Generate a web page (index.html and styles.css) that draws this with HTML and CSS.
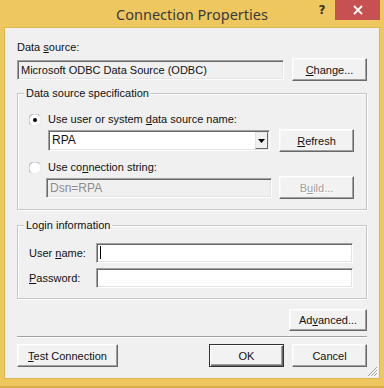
FILE: index.html
```html
<!DOCTYPE html>
<html lang="en">
<head>
    <meta charset="UTF-8">
    <meta name="viewport" content="width=device-width, initial-scale=1.0">
    <title>Connection Properties</title>
    <link rel="stylesheet" href="styles.css">
</head>
<body>
    <div class="window">
        <div class="titlebar">
            <div></div>
            <div class="title">Connection Properties</div>
            <div class="controls">
                <span class="help">?</span>
                <span class="close">
                    <svg width="10" height="10" viewBox="0 0 10 10"><path d="M1 1L9 9M9 1L1 9" stroke="#fff" stroke-width="1.8"/></svg>
                </span>
            </div>
        </div>

        <div class="client">
            <div class="label">Data <u>s</u>ource:</div>
            <div class="row">
                <div class="field readonly source">Microsoft ODBC Data Source (ODBC)</div>
                <button class="btn"><u>C</u>hange...</button>
            </div>

            <fieldset class="group spec">
                <legend>Data source specification</legend>
                <div class="radio-row">
                    <svg class="radio" width="12" height="12" viewBox="0 0 12 12">
                        <circle cx="6" cy="6" r="5.5" fill="#fff"/>
                        <path d="M1.5 10.5A6 6 0 0 1 10.5 1.5" fill="none" stroke="#a0a0a0"/>
                        <path d="M10.5 1.5A6 6 0 0 1 1.5 10.5" fill="none" stroke="#e3e3e3"/>
                        <circle cx="6" cy="6" r="2" fill="#000"/>
                    </svg>
                    <span>Use user or system <u>d</u>ata source name:</span>
                </div>
                <div class="row indent">
                    <div class="field combo">
                        <span>RPA</span>
                        <span class="drop">
                            <svg width="7" height="4" viewBox="0 0 7 4"><path d="M0 0H7L3.5 4Z" fill="#000"/></svg>
                        </span>
                    </div>
                    <button class="btn btn-narrow"><u>R</u>efresh</button>
                </div>
                <div class="radio-row second">
                    <svg class="radio" width="12" height="12" viewBox="0 0 12 12">
                        <circle cx="6" cy="6" r="5.5" fill="#fff"/>
                        <path d="M1.5 10.5A6 6 0 0 1 10.5 1.5" fill="none" stroke="#a0a0a0"/>
                        <path d="M10.5 1.5A6 6 0 0 1 1.5 10.5" fill="none" stroke="#e3e3e3"/>
                    </svg>
                    <span>Use co<u>n</u>nection string:</span>
                </div>
                <div class="row indent tight">
                    <div class="field readonly disabled conn">Dsn=RPA</div>
                    <button class="btn btn-narrow disabled">B<u>u</u>ild...</button>
                </div>
            </fieldset>

            <fieldset class="group login">
                <legend>Login information</legend>
                <div class="login-row">
                    <span class="login-label">User <u>n</u>ame:</span>
                    <div class="field login-field"><span class="caret"></span></div>
                </div>
                <div class="login-row">
                    <span class="login-label"><u>P</u>assword:</span>
                    <div class="field login-field"></div>
                </div>
            </fieldset>

            <div class="advanced-row">
                <button class="btn advanced">Ad<u>v</u>anced...</button>
            </div>

            <div class="separator"></div>

            <div class="footer">
                <button class="btn test"><u>T</u>est Connection</button>
                <div class="footer-right">
                    <button class="btn btn-default">OK</button>
                    <button class="btn">Cancel</button>
                </div>
            </div>

            <svg class="grip" width="12" height="12" viewBox="0 0 12 12">
                <path d="M11 2L2 11M11 5L5 11M11 8L8 11" stroke="#a0a0a0" stroke-width="1"/>
                <path d="M12 3L3 12M12 6L6 12M12 9L9 12" stroke="#fff" stroke-width="1"/>
            </svg>
        </div>
    </div>
</body>
</html>
```

FILE: styles.css
```css
body {
    margin: 0;
    font-family: 'Liberation Sans', Arial, sans-serif;
    font-size: 11px;
    color: #111;
}
u {
    text-decoration: underline;
    text-underline-offset: 1px;
}
.window {
    width: 384px;
    height: 388px;
    background-color: #efc75f;
    box-sizing: border-box;
    border-bottom: 2px solid #d9ae47;
}
.titlebar {
    height: 28px;
    display: grid;
    grid-template-columns: 1fr auto 1fr;
}
.title {
    font-family: 'Noto Sans', sans-serif;
    font-size: 14.5px;
    color: #3a3a3a;
    line-height: 28px;
}
.controls {
    display: flex;
    justify-content: flex-end;
    align-items: flex-start;
    padding-right: 4px;
}
.help {
    font-family: 'DejaVu Sans', sans-serif;
    font-weight: bold;
    font-size: 12px;
    color: #333;
    width: 26px;
    line-height: 20px;
    text-align: center;
}
.close {
    width: 45px;
    height: 20px;
    background-color: #c75050;
    display: flex;
    align-items: center;
    justify-content: center;
}
.client {
    position: relative;
    margin: 0 5px;
    height: 350px;
    background-color: #f0f0f0;
    box-shadow: 0 0 0 1px #dcb650;
    padding: 13px 12px 0 12px;
    box-sizing: border-box;
}
.label {
    line-height: 13px;
    margin-bottom: 4px;
}
.row {
    display: flex;
    align-items: center;
    justify-content: space-between;
}
.field {
    height: 20px;
    box-sizing: border-box;
    background: #fff;
    border: 1px solid;
    border-color: #a0a0a0 #fff #fff #a0a0a0;
    box-shadow: inset 1px 1px 0 #696969, inset -1px -1px 0 #e3e3e3;
    padding: 3px 0 0 3px;
    line-height: 13px;
    white-space: nowrap;
}
.readonly {
    background: #f0f0f0;
}
.source {
    width: 267px;
}
.btn {
    width: 75px;
    height: 23px;
    box-sizing: border-box;
    font-family: 'Liberation Sans', Arial, sans-serif;
    font-size: 11px;
    color: #111;
    background: #f2f2f2;
    border: 1px solid;
    border-color: #fff #696969 #696969 #fff;
    box-shadow: inset -1px -1px 0 #a0a0a0, inset 1px 1px 0 #f8f8f8;
    padding: 0;
}
.btn.disabled {
    color: #a0a0a0;
    text-shadow: 1px 1px 0 #fff;
}
.btn-default {
    border-color: #333;
    box-shadow: inset 1px 1px 0 #fff, inset -1px -1px 0 #696969, inset -2px -2px 0 #a0a0a0;
}
.group {
    margin: 6px 0 0 0;
    padding: 13px 11px 10px 11px;
    border: 1px solid #c5c5c5;
    box-shadow: inset 1px 1px 0 #fff, 1px 1px 0 #fff;
}
.group legend {
    padding: 0 2px;
    margin-left: -5px;
    line-height: 13px;
    background: #f0f0f0;
}
.radio-row {
    display: flex;
    align-items: center;
    gap: 7px;
    line-height: 13px;
}
.radio-row.second {
    margin-top: 9px;
}
.indent {
    margin: 3px 0 0 19px;
}
.indent.tight {
    margin-top: 2px;
}
.btn-narrow {
    margin-right: 1px;
}
.combo {
    width: 222px;
    height: 21px;
    display: flex;
    justify-content: space-between;
    padding-right: 1px;
    font-size: 12px;
}
.drop {
    width: 13px;
    height: 17px;
    margin-top: -2px;
    box-sizing: border-box;
    background: #f0f0f0;
    border: 1px solid;
    border-color: #e3e3e3 #696969 #696969 #e3e3e3;
    display: flex;
    align-items: center;
    justify-content: center;
}
.conn {
    width: 226px;
    margin-left: -2px;
    color: #8c8c8c;
    font-size: 12px;
}
.login {
    margin-top: 9px;
    padding: 11px 13px 10px 11px;
}
.login-row {
    display: flex;
    align-items: center;
}
.login-row + .login-row {
    margin-top: 5px;
}
.login-label {
    width: 67px;
}
.login-field {
    flex: 1;
    padding: 2px 0 0 3px;
}
.caret {
    display: block;
    width: 1px;
    height: 13px;
    background: #000;
}
.advanced-row {
    display: flex;
    justify-content: flex-end;
    margin-top: 10px;
}
.advanced {
    width: 78px;
    height: 22px;
}
.separator {
    margin-top: 5px;
    border-top: 1px solid #a0a0a0;
    border-bottom: 1px solid #fff;
}
.footer {
    display: flex;
    justify-content: space-between;
    margin-top: 6px;
}
.test {
    width: 101px;
}
.footer-right {
    display: flex;
    gap: 8px;
}
.grip {
    position: absolute;
    right: 1px;
    bottom: 1px;
}
```
